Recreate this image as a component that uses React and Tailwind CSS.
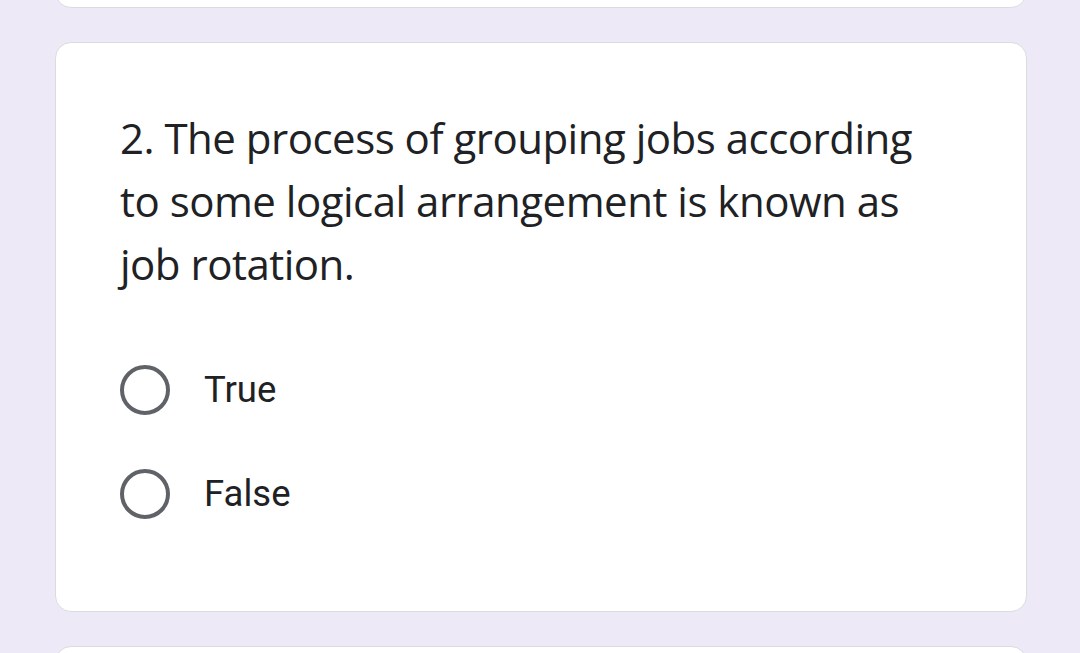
import React from 'react';

const Radio = ({ label }) => (
  <label className="flex items-center h-[104px] cursor-pointer">
    <span className="w-[50px] h-[50px] rounded-full border-[4px] border-[#5f6368] shrink-0" />
    <span className="ml-[34px] text-[36.5px] text-[#202124]" style={{ fontFamily: 'Roboto, sans-serif' }}>{label}</span>
  </label>
);

export default function App() {
  return (
    <div className="h-[653px] overflow-hidden bg-[#ede9f7] pl-[55px] pr-[53px]" style={{ fontFamily: '"Open Sans", sans-serif' }}>
      <div className="flex flex-col gap-[34px]">
        <div className="-mt-[92px] h-[100px] bg-white rounded-[16px] border border-[#dadce0]" />
        <div className="h-[570px] bg-white rounded-[16px] border border-[#dadce0] px-[64px] pt-[63px]">
          <p className="w-[820px] text-[42px] leading-[63px] text-[#202124] tracking-[-0.5px]">
            2. The process of grouping jobs according to some logical arrangement is known as job rotation.
          </p>
          <div className="mt-[43px]">
            <Radio label="True" />
            <Radio label="False" />
          </div>
        </div>
        <div className="h-[100px] bg-white rounded-[16px] border border-[#dadce0]" />
      </div>
    </div>
  );
}
